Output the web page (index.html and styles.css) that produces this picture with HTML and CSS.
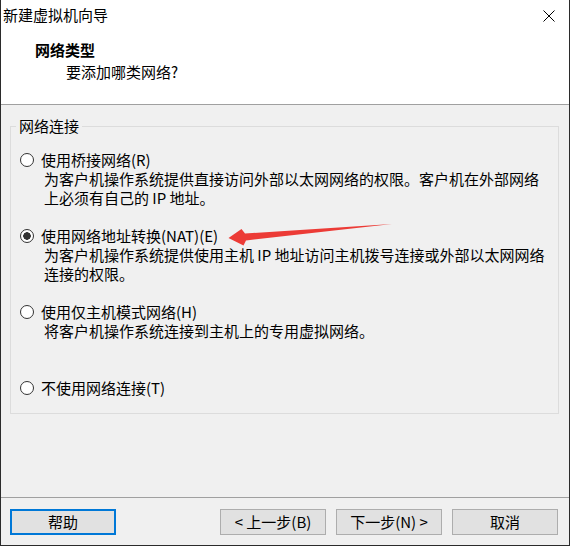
FILE: index.html
```html
<!DOCTYPE html>
<html lang="zh-CN">
<head>
<meta charset="utf-8">
<title>新建虚拟机向导</title>
<link rel="stylesheet" href="styles.css">
</head>
<body>
<div class="window">
  <div class="top">
    <div class="titlebar">
      <span class="title">新建虚拟机向导</span>
      <svg class="close" width="12" height="12" viewBox="0 0 12 12"><path d="M0.5 0.5 L11.5 11.5 M11.5 0.5 L0.5 11.5" stroke="#000" stroke-width="1" fill="none"/></svg>
    </div>
    <div class="header">
      <div class="h-title">网络类型</div>
      <div class="h-sub">要添加哪类网络?</div>
    </div>
  </div>
  <div class="main">
    <fieldset class="group">
      <legend class="legend">网络连接</legend>
      <div class="option first">
        <label class="opt-label"><input class="radio" type="radio" name="net"><span>使用桥接网络(R)</span></label>
        <div class="desc">为客户机操作系统提供直接访问外部以太网网络的权限。客户机在外部网络<br>上必须有自己的 IP 地址。</div>
      </div>
      <div class="option">
        <label class="opt-label"><input class="radio" type="radio" name="net" checked><span>使用网络地址转换(NAT)(E)</span></label>
        <div class="desc">为客户机操作系统提供使用主机 IP 地址访问主机拨号连接或外部以太网网络<br>连接的权限。</div>
      </div>
      <div class="option">
        <label class="opt-label"><input class="radio" type="radio" name="net"><span>使用仅主机模式网络(H)</span></label>
        <div class="desc">将客户机操作系统连接到主机上的专用虚拟网络。</div>
      </div>
      <div class="option last">
        <label class="opt-label"><input class="radio" type="radio" name="net"><span>不使用网络连接(T)</span></label>
      </div>
    </fieldset>
  </div>
  <div class="footer">
    <button class="btn btn-default" type="button">帮助</button>
    <div class="btn-group">
      <button class="btn" type="button">&lt; 上一步(B)</button>
      <button class="btn" type="button">下一步(N) &gt;</button>
      <button class="btn" type="button">取消</button>
    </div>
  </div>
  <svg class="arrow" width="180" height="40" viewBox="220 215 180 40">
    <polygon points="228.5,238 241.5,229 245,233.5 392,224 246,240.5 243.5,245.5" fill="#ec3b36"/>
  </svg>
</div>
</body>
</html>
```
FILE: styles.css
```css
html, body {
  margin: 0;
  padding: 0;
}
body {
  font-family: "Noto Sans CJK SC", "Noto Sans", sans-serif;
  font-size: 15px;
  color: #000;
  background: #f0f0f0;
}
.window {
  position: relative;
  width: 570px;
  height: 546px;
  box-sizing: border-box;
  border: 1px solid #2b2b2b;
  border-top: none;
  background: #f0f0f0;
}
.top {
  height: 104px;
  background: #fff;
  border-bottom: 1px solid #a0a0a0;
}
.titlebar {
  display: flex;
  align-items: flex-start;
  justify-content: space-between;
  height: 32px;
  padding: 0 14px 0 2px;
}
.title {
  padding-top: 5px;
  line-height: 20px;
}
.close {
  margin-top: 10px;
  display: block;
}
.header {
  padding: 8px 0 0 34px;
}
.h-title {
  font-weight: bold;
  line-height: 20px;
}
.h-sub {
  margin-top: 2px;
  padding-left: 31px;
  line-height: 20px;
}
.main {
  height: 392px;
  border-bottom: 1px solid #a0a0a0;
  overflow: hidden;
}
.group {
  margin: 11px 10px 0 9px;
  padding: 0 0 15px 0;
  border: 1px solid #dcdcdc;
  min-inline-size: 0;
}
.legend {
  margin-left: 5px;
  padding: 0 3px;
  line-height: 20px;
}
.option {
  margin-top: 19px;
}
.option.first {
  margin-top: 14px;
}
.option.last {
  margin-top: 37.5px;
}
.opt-label {
  display: flex;
  align-items: center;
  gap: 7px;
  height: 20px;
  line-height: 20px;
  padding-left: 9px;
}
.radio {
  appearance: none;
  -webkit-appearance: none;
  flex: none;
  margin: 0;
  width: 14px;
  height: 14px;
  box-sizing: border-box;
  border: 1px solid #333;
  border-radius: 50%;
  background: #fff;
}
.radio:checked {
  background: radial-gradient(circle at center, #333 0 3.5px, #fff 4px);
}
.desc {
  padding-left: 33px;
  line-height: 18.5px;
  white-space: nowrap;
}
.footer {
  display: flex;
  justify-content: space-between;
  padding: 11px 11px 0 9px;
}
.btn-group {
  display: flex;
  gap: 10px;
}
.btn {
  width: 106px;
  height: 26px;
  box-sizing: border-box;
  margin: 0;
  padding: 0;
  border: 1px solid #adadad;
  background: #e1e1e1;
  font-family: inherit;
  font-size: 15px;
  line-height: 20px;
  color: #000;
}
.btn-default {
  border: 2px solid #0078d7;
}
.arrow {
  position: absolute;
  left: 219px;
  top: 215px;
  pointer-events: none;
}
```
